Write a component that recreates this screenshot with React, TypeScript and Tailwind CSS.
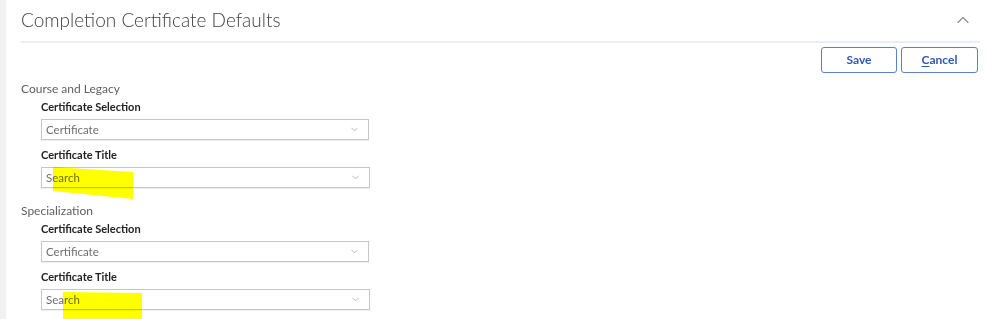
import { ChevronDown, ChevronUp } from 'lucide-react'

function SelectBox({ placeholder, w }: { placeholder: string; w: string }) {
  return (
    <div className={`mt-[3px] h-[21px] ${w} flex items-center justify-between border border-[#c6c6c6] bg-white pl-[4px] pr-[8px] shadow-[0_1px_1px_rgba(0,0,0,0.06)]`}>
      <span className="text-[11.5px] text-[#6e6e6e]">{placeholder}</span>
      <ChevronDown className="h-[11px] w-[11px] text-[#a0a0a0]" strokeWidth={1.6} />
    </div>
  )
}

function CertGroup({ label, wTitle }: { label: string; wTitle: string }) {
  return (
    <div>
      <div className="text-[12px] leading-[18px] text-[#5f5f5f]">{label}</div>
      <div className="pl-[20px]">
        <div className="text-[11px] leading-[18px] font-bold text-[#222]">Certificate Selection</div>
        <SelectBox placeholder="Certificate" w="w-[328px]" />
        <div className="mt-[6px] text-[11px] leading-[18px] font-bold text-[#222]">Certificate Title</div>
        <SelectBox placeholder="Search" w={wTitle} />
      </div>
    </div>
  )
}

export default function App() {
  return (
    <div className="relative h-[319px] w-[996px] overflow-hidden bg-white" style={{ fontFamily: 'Lato, "Open Sans", sans-serif' }}>
      <div className="flex h-full">
        <div className="w-[6px] shrink-0 bg-[#f1f1f1]" />
        <div className="flex-1 pl-[15px] pr-[16px] pt-[6px]">
          {/* header */}
          <div className="flex h-[28px] items-center justify-between">
            <h2 className="text-[19px] leading-[28px] font-light text-[#3f3f3f]">Completion Certificate Defaults</h2>
            <ChevronUp className="mr-[7px] h-[20px] w-[20px] text-[#8a8a8a]" strokeWidth={1.3} />
          </div>
          <div className="mt-[7px] h-[2px] bg-[#eceef2]" />

          {/* actions */}
          <div className="mt-[4px] flex justify-end gap-[4px] pr-[2px]">
            <button className="h-[26px] w-[76px] rounded-[3px] border border-[#5b81cc] bg-white text-[12px] font-bold text-[#2f57b5]">
              Save
            </button>
            <button className="h-[26px] w-[77px] rounded-[3px] border border-[#5b81cc] bg-white text-[12px] font-bold text-[#2f57b5]">
              <span className="underline underline-offset-2">C</span>ancel
            </button>
          </div>

          <div className="mt-[7px]">
            <CertGroup label="Course and Legacy" wTitle="w-[329px]" />
          </div>
          <div className="mt-[14px]">
            <CertGroup label="Specialization" wTitle="w-[329px]" />
          </div>
        </div>
      </div>

      {/* highlighter marks */}
      <svg className="pointer-events-none absolute left-0 top-0 mix-blend-multiply" width="996" height="319">
        <polygon points="53,167 133,172 133,199 53,191" fill="#ffff00" />
        <polygon points="63,292 142,293 142,319 63,319" fill="#ffff00" />
      </svg>
    </div>
  )
}
